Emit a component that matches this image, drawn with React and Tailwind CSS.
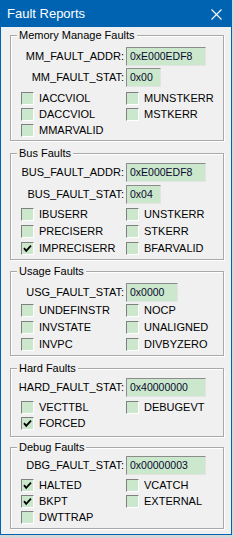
import React from "react";

const sections = [
  {
    title: "Memory Manage Faults",
    box: "mt-[8px] pt-[11px] pb-[3px]",
    fieldGap: "gap-[2px]",
    rowsTop: "mt-[5px]",
    rowGap: "gap-y-[3px]",
    fields: [
      { label: "MM_FAULT_ADDR:", value: "0xE000EDF8", w: "w-[80px]" },
      { label: "MM_FAULT_STAT:", value: "0x00", w: "w-[35px]" },
    ],
    flags: [
      ["IACCVIOL", false],
      ["MUNSTKERR", false],
      ["DACCVIOL", false],
      ["MSTKERR", false],
      ["MMARVALID", false],
    ],
  },
  {
    title: "Bus Faults",
    box: "mt-[12px] pt-[9px] pb-[4px]",
    fieldGap: "gap-[3px]",
    rowsTop: "mt-[4px]",
    rowGap: "gap-y-[4px]",
    fields: [
      { label: "BUS_FAULT_ADDR:", value: "0xE000EDF8", w: "w-[80px]" },
      { label: "BUS_FAULT_STAT:", value: "0x04", w: "w-[35px]" },
    ],
    flags: [
      ["IBUSERR", false],
      ["UNSTKERR", false],
      ["PRECISERR", false],
      ["STKERR", false],
      ["IMPRECISERR", true],
      ["BFARVALID", false],
    ],
  },
  {
    title: "Usage Faults",
    box: "mt-[11px] pt-[11px] pb-[4px]",
    fieldGap: "gap-[2px]",
    rowsTop: "mt-[2px]",
    rowGap: "gap-y-[4px]",
    fields: [{ label: "USG_FAULT_STAT:", value: "0x0000", w: "w-[52px]" }],
    flags: [
      ["UNDEFINSTR", false],
      ["NOCP", false],
      ["INVSTATE", false],
      ["UNALIGNED", false],
      ["INVPC", false],
      ["DIVBYZERO", false],
    ],
  },
  {
    title: "Hard Faults",
    box: "mt-[12px] pt-[9px] pb-[6px]",
    fieldGap: "gap-[2px]",
    rowsTop: "mt-[4px]",
    rowGap: "gap-y-[3px]",
    fields: [{ label: "HARD_FAULT_STAT:", value: "0x40000000", w: "w-[80px]" }],
    flags: [
      ["VECTTBL", false],
      ["DEBUGEVT", false],
      ["FORCED", true],
    ],
  },
  {
    title: "Debug Faults",
    box: "mt-[10px] pt-[8px] pb-[4px]",
    fieldGap: "gap-[2px]",
    rowsTop: "mt-[4px]",
    rowGap: "gap-y-[3px]",
    fields: [{ label: "DBG_FAULT_STAT:", value: "0x00000003", w: "w-[80px]" }],
    flags: [
      ["HALTED", true],
      ["VCATCH", false],
      ["BKPT", true],
      ["EXTERNAL", false],
      ["DWTTRAP", false],
    ],
  },
];

function Check({ label, checked }) {
  return (
    <div className="flex items-center h-[13px]">
      <div className="w-[13px] h-[13px] shrink-0 bg-[#cce8cc] border border-t-[#808080] border-l-[#808080] border-b-[#ffffff] border-r-[#ffffff] flex items-center justify-center">
        {checked && (
          <svg width="9" height="9" viewBox="0 0 9 9">
            <path d="M1 4.2 L3.2 6.8 L8 1.6" fill="none" stroke="#000" strokeWidth="1.8" />
          </svg>
        )}
      </div>
      <span className="ml-[5px] text-[11px] leading-[13px] text-black">{label}</span>
    </div>
  );
}

function Field({ label, value, w }) {
  return (
    <div className="flex items-center">
      <div className="w-[113px] text-right text-[11px] leading-[19px] text-black">{label}</div>
      <div
        className={`${w} ml-[2px] h-[19px] bg-[#cce8cc] border border-t-[#8c8c8c] border-l-[#8c8c8c] border-b-[#e3e3e3] border-r-[#e3e3e3] pl-[3px] text-[10.5px] leading-[17px] text-[#0a0a30]`}
      >
        {value}
      </div>
    </div>
  );
}

function Group({ s }) {
  return (
    <div className={`relative border border-[#a9a9a9] shadow-[inset_1px_1px_0_#ffffff,1px_1px_0_#ffffff] ${s.box}`}>
      <span className="absolute left-[6px] -top-[8px] px-[2px] bg-[#f0f0f0] text-[11px] leading-[14px] text-black">
        {s.title}
      </span>
      <div className={`flex flex-col ${s.fieldGap}`}>
        {s.fields.map((f) => (
          <Field key={f.label} {...f} />
        ))}
      </div>
      <div className={`grid grid-cols-[105px_1fr] pl-[10px] ${s.rowsTop} ${s.rowGap}`}>
        {s.flags.map(([name, on]) => (
          <Check key={name} label={name} checked={on} />
        ))}
      </div>
    </div>
  );
}

export default function App() {
  return (
    <div className="w-[234px] h-[538px] bg-[#d6d6d6] font-['Liberation_Sans',Arial,sans-serif]">
      <div className="w-[232px] h-[535px] border border-[#0063b1] bg-[#f0f0f0] flex flex-col">
        <div className="h-[26px] bg-[#0063b1] flex items-center justify-between pl-[6px] pr-[9px] shrink-0">
          <span className="text-white text-[13px] leading-[16px]">Fault Reports</span>
          <svg width="11" height="11" viewBox="0 0 11 11">
            <path d="M0.5 0.5 L10.5 10.5 M10.5 0.5 L0.5 10.5" stroke="#fff" strokeWidth="1.1" />
          </svg>
        </div>
        <div className="pl-[9px] pr-[7px]">
          {sections.map((s) => (
            <Group key={s.title} s={s} />
          ))}
        </div>
      </div>
    </div>
  );
}
